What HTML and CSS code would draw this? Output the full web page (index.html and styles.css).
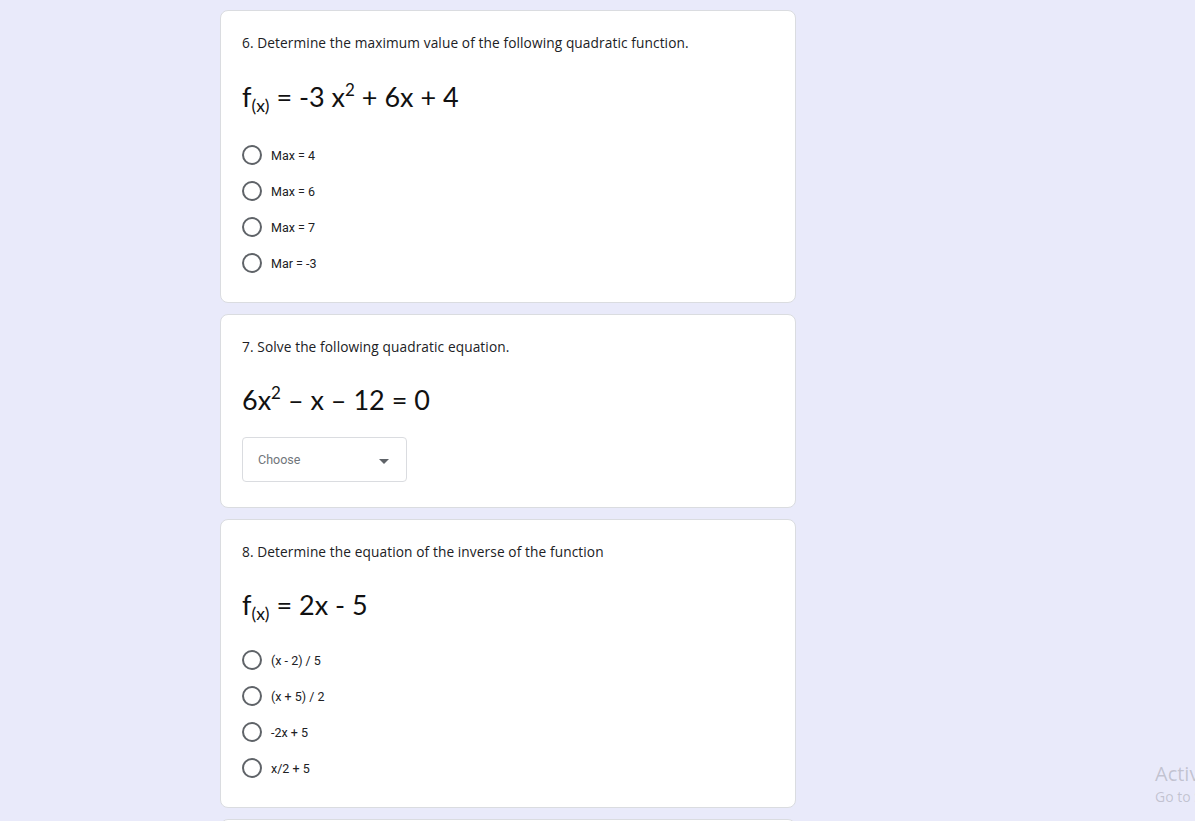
FILE: index.html
```html
<!DOCTYPE html>
<html lang="en">
<head>
<meta charset="utf-8">
<title>Quiz</title>
<link rel="stylesheet" href="styles.css">
</head>
<body>
<main class="page">
  <section class="card card-one">
    <div class="q-title">6. Determine the maximum value of the following quadratic function.</div>
    <div class="eq eq-one">f<sub>(x)</sub> = -3 x<sup>2</sup> + 6x + 4</div>
    <ul class="options opt-one">
      <li class="opt"><span class="radio"></span><span class="label">Max = 4</span></li>
      <li class="opt"><span class="radio"></span><span class="label">Max = 6</span></li>
      <li class="opt"><span class="radio"></span><span class="label">Max = 7</span></li>
      <li class="opt"><span class="radio"></span><span class="label">Mar = -3</span></li>
    </ul>
  </section>
  <section class="card card-two">
    <div class="q-title">7. Solve the following quadratic equation.</div>
    <div class="eq eq-two">6x<sup>2</sup> – x – 12 = 0</div>
    <div class="select">
      <span class="select-text">Choose</span>
      <svg class="caret" width="10" height="5" viewBox="0 0 10 5"><path d="M0 0 L10 0 L5 5 Z" fill="#5f6368"/></svg>
    </div>
  </section>
  <section class="card card-three">
    <div class="q-title">8. Determine the equation of the inverse of the function</div>
    <div class="eq eq-three">f<sub>(x)</sub> = 2x - 5</div>
    <ul class="options opt-three">
      <li class="opt"><span class="radio"></span><span class="label">(x - 2) / 5</span></li>
      <li class="opt"><span class="radio"></span><span class="label">(x + 5) / 2</span></li>
      <li class="opt"><span class="radio"></span><span class="label">-2x + 5</span></li>
      <li class="opt"><span class="radio"></span><span class="label">x/2 + 5</span></li>
    </ul>
  </section>
  <section class="card card-four"></section>
</main>
<div class="watermark">
  <div class="wm-big">Activate Windows</div>
  <div class="wm-small">Go to Settings to activate Windows.</div>
</div>
</body>
</html>
```

FILE: styles.css
```css
html, body {
  margin: 0;
  padding: 0;
  height: 100%;
  overflow: hidden;
}
body {
  background: #e9eafa;
  font-family: "Open Sans", Arial, sans-serif;
  color: #202124;
}
.page {
  padding: 10px 0 0 220px;
  display: flex;
  flex-direction: column;
  gap: 11px;
  width: 576px;
}
.card {
  box-sizing: border-box;
  width: 576px;
  background: #fff;
  border: 1px solid #dadce0;
  border-radius: 8px;
  padding: 24px 22px 21px 21px;
}
.card-two { padding-bottom: 25px; }
.card-four { height: 40px; }
.q-title {
  font-family: "Open Sans", Arial, sans-serif;
  font-size: 13.7px;
  line-height: 16px;
  color: #202124;
  letter-spacing: 0.1px;
}
.eq {
  font-family: Lato, "Liberation Sans", sans-serif;
  font-size: 27px;
  line-height: 30px;
  height: 30px;
  color: #111;
  white-space: nowrap;
}
.eq sub {
  font-size: 17.5px;
  vertical-align: -5px;
  line-height: 0;
}
.eq sup {
  font-size: 17px;
  vertical-align: 11px;
  line-height: 0;
}
.eq-one { margin-top: 31px; }
.eq-two { margin-top: 30px; }
.eq-three { margin-top: 30px; }
.options {
  list-style: none;
  margin: 0;
  padding: 0;
}
.opt-one { margin-top: 25px; }
.opt-three { margin-top: 22px; }
.opt {
  height: 36px;
  display: flex;
  align-items: center;
  gap: 9px;
}
.radio {
  box-sizing: border-box;
  width: 20px;
  height: 20px;
  border: 2px solid #5f6368;
  border-radius: 50%;
  flex: none;
}
.label {
  font-family: Roboto, Arial, sans-serif;
  font-size: 12.5px;
  color: #202124;
}
.select {
  box-sizing: border-box;
  margin-top: 22px;
  width: 165px;
  height: 45px;
  border: 1px solid #dadce0;
  border-radius: 4px;
  display: flex;
  align-items: center;
  justify-content: space-between;
  padding: 0 17px 0 15px;
}
.select-text {
  font-family: Roboto, Arial, sans-serif;
  font-size: 12.5px;
  color: #70757a;
}
.caret { display: block; margin-top: 3px; }
.watermark {
  position: absolute;
  left: 1155px;
  top: 761px;
  white-space: nowrap;
  font-family: "Open Sans", "Noto Sans", sans-serif;
  color: rgba(120, 120, 130, 0.35);
}
.wm-big { font-size: 20px; line-height: 26px; }
.wm-small { font-size: 14px; line-height: 20px; }
```
